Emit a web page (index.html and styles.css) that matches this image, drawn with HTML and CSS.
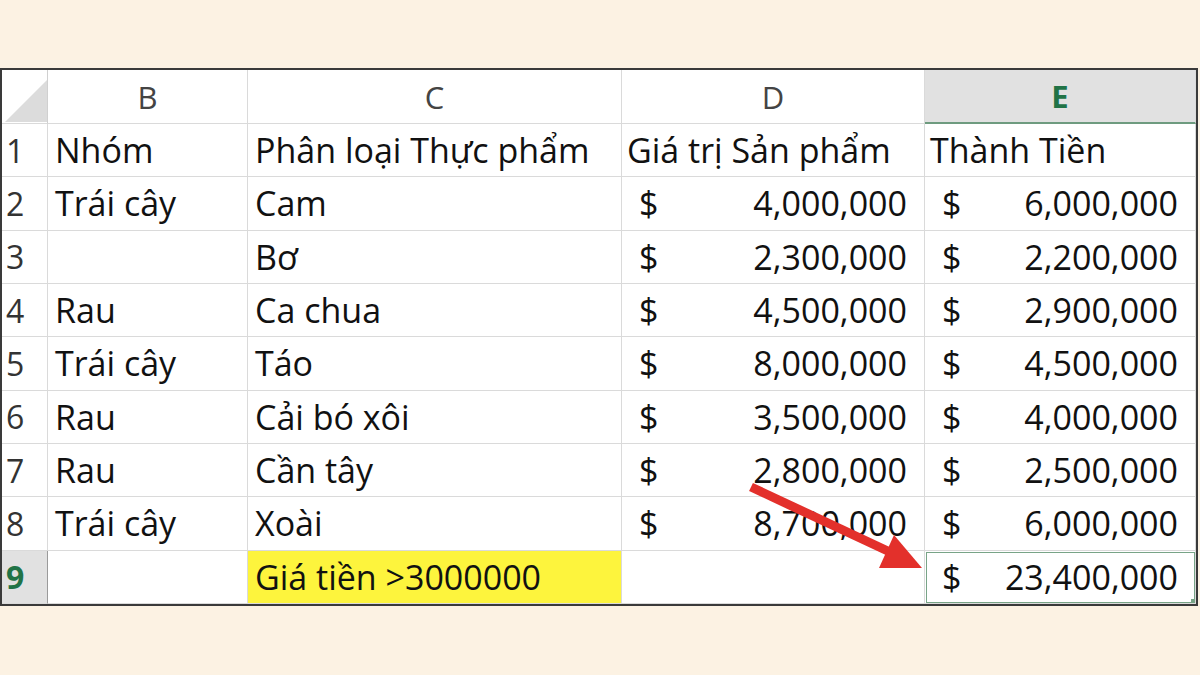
FILE: index.html
```html
<!DOCTYPE html>
<html lang="vi">
<head>
<meta charset="utf-8">
<title>Bảng tính</title>
<link rel="stylesheet" href="styles.css">
</head>
<body>
<div class="sheet">
  <div class="grid">
    <div class="corner"><span class="tri"></span></div>
    <div class="colhead">B</div>
    <div class="colhead">C</div>
    <div class="colhead">D</div>
    <div class="colhead sel">E</div>

    <div class="rowhead">1</div>
    <div class="cell">Nhóm</div>
    <div class="cell">Phân loại Thực phẩm</div>
    <div class="cell tight">Giá trị Sản phẩm</div>
    <div class="cell tight">Thành Tiền</div>

    <div class="rowhead">2</div>
    <div class="cell">Trái cây</div>
    <div class="cell">Cam</div>
    <div class="cell money"><span>$</span><span>4,000,000</span></div>
    <div class="cell money"><span>$</span><span>6,000,000</span></div>

    <div class="rowhead">3</div>
    <div class="cell"></div>
    <div class="cell">Bơ</div>
    <div class="cell money"><span>$</span><span>2,300,000</span></div>
    <div class="cell money"><span>$</span><span>2,200,000</span></div>

    <div class="rowhead">4</div>
    <div class="cell">Rau</div>
    <div class="cell">Ca chua</div>
    <div class="cell money"><span>$</span><span>4,500,000</span></div>
    <div class="cell money"><span>$</span><span>2,900,000</span></div>

    <div class="rowhead">5</div>
    <div class="cell">Trái cây</div>
    <div class="cell">Táo</div>
    <div class="cell money"><span>$</span><span>8,000,000</span></div>
    <div class="cell money"><span>$</span><span>4,500,000</span></div>

    <div class="rowhead">6</div>
    <div class="cell">Rau</div>
    <div class="cell">Cải bó xôi</div>
    <div class="cell money"><span>$</span><span>3,500,000</span></div>
    <div class="cell money"><span>$</span><span>4,000,000</span></div>

    <div class="rowhead">7</div>
    <div class="cell">Rau</div>
    <div class="cell">Cần tây</div>
    <div class="cell money"><span>$</span><span>2,800,000</span></div>
    <div class="cell money"><span>$</span><span>2,500,000</span></div>

    <div class="rowhead">8</div>
    <div class="cell">Trái cây</div>
    <div class="cell">Xoài</div>
    <div class="cell money"><span>$</span><span>8,700,000</span></div>
    <div class="cell money"><span>$</span><span>6,000,000</span></div>

    <div class="rowhead selrow">9</div>
    <div class="cell"></div>
    <div class="cell yellow">Giá tiền &gt;3000000</div>
    <div class="cell"></div>
    <div class="cell money active"><span>$</span><span>23,400,000</span><i class="handle"></i></div>
  </div>
</div>
<svg class="arrow" width="1200" height="675" viewBox="0 0 1200 675" aria-hidden="true">
  <line x1="751" y1="487" x2="892" y2="553" stroke="#e3302b" stroke-width="9"/>
  <polygon points="922,568 894,535 879,568" fill="#e3302b"/>
</svg>
</body>
</html>
```
FILE: styles.css
```css
html, body {
  margin: 0;
  padding: 0;
}
body {
  background: #fcf2e3;
  width: 1200px;
  height: 675px;
  position: relative;
  overflow: hidden;
  font-family: "Open Sans", "Noto Sans", sans-serif;
  color: #111;
}
.sheet {
  margin-top: 68px;
  width: 1194px;
  border: 2px solid #3a3a3a;
  background: #fff;
}
.grid {
  display: grid;
  grid-template-columns: 46px 200px 374px 303px 271px;
  grid-template-rows: 54px repeat(9, 53.33px);
}
.grid > div {
  border-right: 1px solid #dadada;
  border-bottom: 1px solid #dadada;
  box-sizing: border-box;
  display: flex;
  align-items: center;
  font-size: 34px;
  white-space: nowrap;
  overflow: hidden;
}
.corner {
  position: relative;
  border-right-color: #d0d0d0 !important;
}
.tri {
  position: absolute;
  left: 3px;
  top: 10px;
  width: 0;
  height: 0;
  border-left: 42px solid transparent;
  border-bottom: 42px solid #dcdcdc;
}
.colhead {
  justify-content: center;
  color: #444;
  font-size: 31px !important;
}
.colhead.sel {
  background: #e1e1e1;
  color: #217346;
  font-weight: 700;
  border-bottom: 2px solid #6e9b7f !important;
}
.rowhead {
  padding-left: 4px;
  color: #333;
  font-size: 32px !important;
}
.rowhead.selrow {
  background: #e1e1e1;
  color: #217346;
  font-weight: 700;
  border-right: 1px solid #9a9a9a !important;
}
.cell {
  padding-left: 7px;
}
.cell.tight {
  padding-left: 5px;
}
.money {
  justify-content: space-between;
  padding: 0 17px 0 17px;
}
.yellow {
  background: #fdf43d;
}
.active {
  position: relative;
  outline: 1.5px solid #78a487;
  outline-offset: -2px;
}
.handle {
  position: absolute;
  right: 0;
  bottom: 0;
  width: 4px;
  height: 4px;
  background: #78a487;
}
.arrow {
  position: absolute;
  left: 0;
  top: 0;
  pointer-events: none;
}
```
